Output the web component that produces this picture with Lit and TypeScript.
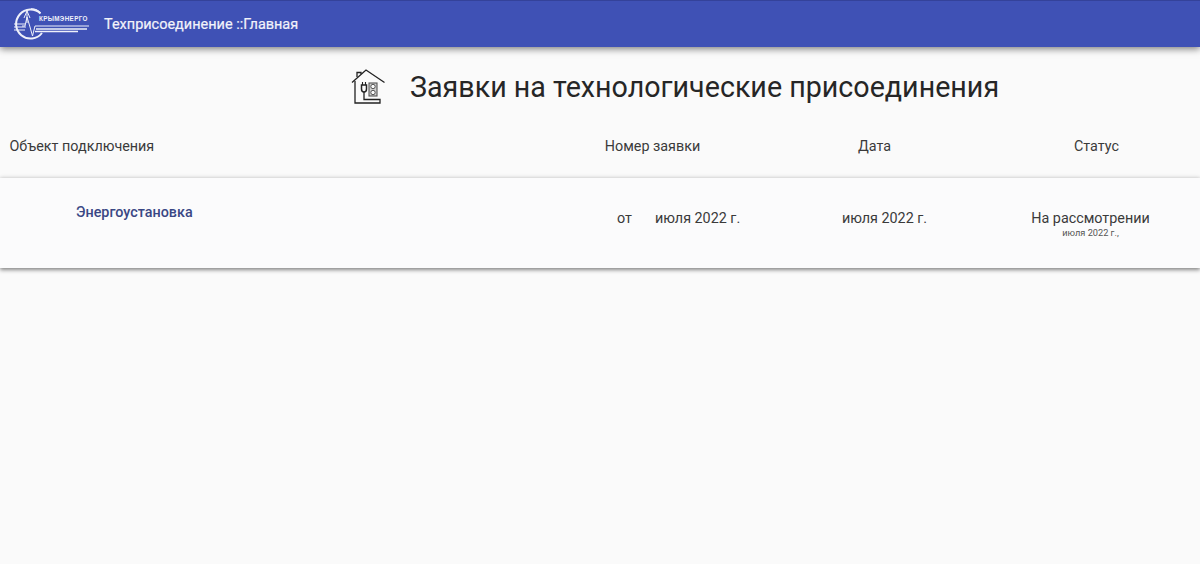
import { LitElement, html, css } from "lit";
import { customElement } from "lit/decorators.js";

@customElement("app-root")
export class AppRoot extends LitElement {
  static styles = css`
    :host { display: block; height: 564px; background: #fafafa; font-family: Roboto, "Liberation Sans", sans-serif; color: #212121; overflow: hidden; }
    .bar { height: 47px; background: #3f51b5; box-shadow: 0 2px 7px rgba(0,0,0,.5); border-top: 1px solid #34429a; box-sizing: border-box; display: flex; align-items: center; padding-left: 12px; gap: 14px; color: #fff; position: relative; }
    .bar svg { display: block; }
    .brand { font-size: 14.48px; font-weight: 400; color: #f2f3fa; -webkit-text-stroke: .2px #f2f3fa; }
    .logo-text { font-family: "Liberation Sans", sans-serif; font-size: 6.3px; font-weight: 700; fill: #eef0fa; letter-spacing: .35px; }
    .title { display: flex; align-items: center; padding: 20px 0 0 351px; gap: 25px; height: 40px; }
    .title h1 { margin: 0; font-size: 28.65px; font-weight: 400; line-height: 40px; white-space: nowrap; color: #262626; }
    .head { display: grid; grid-template-columns: 541px 223px 221px 223px; height: 38px; margin-top: 20px; align-items: center; font-size: 14.35px; width: 1208px; color: #3a3a3a; }
    .head div { text-align: center; }
    .head div:first-child { text-align: left; padding-left: 9.5px; }
    .card { margin-top: 13px; height: 90px; background: #fbfbfc; box-shadow: 0 2px 4px rgba(0,0,0,.45), 0 -1px 4px rgba(0,0,0,.1); display: grid; grid-template-columns: 76px 541px 171px 193px 219px; font-size: 14.35px; color: #3a3a3a; }
    .name { grid-column: 2; padding-top: 26px; font-weight: 500; color: #3a4784; line-height: 17px; }
    .num { display: flex; gap: 23px; padding-top: 32px; line-height: 17px; white-space: nowrap; }
    .date { padding-top: 32px; line-height: 17px; text-align: center; }
    .status { text-align: center; padding-top: 32px; line-height: 17px; }
    .status small { display: block; font-size: 9.2px; line-height: 11px; color: #555; }
  `;

  render() {
    return html`
      <div class="bar">
        <svg width="78" height="40" viewBox="0 0 78 40" fill="none" stroke="#eef0fa">
          <path d="M28.5 9.5 A14.5 14.5 0 1 0 30 29" stroke-width="2" />
          <path d="M19 5 C23 4.8 26 6.4 28.5 9" stroke-width="1.5" />
          <path d="M2 20 H13 M2 23 H14 M2 26 H13" stroke-width="1.2" />
          <path d="M10 22 H13 L15 13 L18 23 L20.5 32 L23 22 H77" stroke-width="1" />
          <path d="M24 25 H75" stroke-width="1.3" />
          <path d="M23 27.5 H66" stroke-width="1.3" />
          <path d="M15 6 V19 M12 14 L15 7 L18 14" stroke-width="1" />
          <text class="logo-text" x="27" y="17" stroke="none">КРЫМЭНЕРГО</text>
        </svg>
        <span class="brand">Техприсоединение ::Главная</span>
      </div>
      <div class="title">
        <svg width="34" height="36" viewBox="0 0 34 36" fill="none" stroke="#222" stroke-width="1.3">
          <path d="M1 13.5 L15 1 L33.5 13.5" />
          <path d="M6 8 V3.5 H10 V5" />
          <path d="M4 12 V34 H29 V30.5 H13 V23" />
          <path d="M10.5 16 H15.5 V20 Q15.5 23 13 23 Q10.5 23 10.5 20 Z" stroke-width="1.5" />
          <path d="M11.5 16 V13 M14.5 16 V13" stroke-width="1.1" />
          <rect x="18" y="14" width="8" height="13" stroke="#555" stroke-width="1.1" fill="#cfcfcf" />
          <circle cx="22" cy="17.5" r="2.2" stroke="#444" stroke-width=".9" fill="#fafafa" />
          <circle cx="22" cy="23.5" r="2.2" stroke="#444" stroke-width=".9" fill="#fafafa" />
        </svg>
        <h1>Заявки на технологические присоединения</h1>
      </div>
      <div class="head">
        <div>Объект подключения</div>
        <div>Номер заявки</div>
        <div>Дата</div>
        <div>Статус</div>
      </div>
      <div class="card">
        <div class="name">Энергоустановка</div>
        <div class="num"><span>от</span><span>июля 2022 г.</span></div>
        <div class="date">июля 2022 г.</div>
        <div class="status">На рассмотрении<small>июля 2022 г.,</small></div>
      </div>
    `;
  }
}
